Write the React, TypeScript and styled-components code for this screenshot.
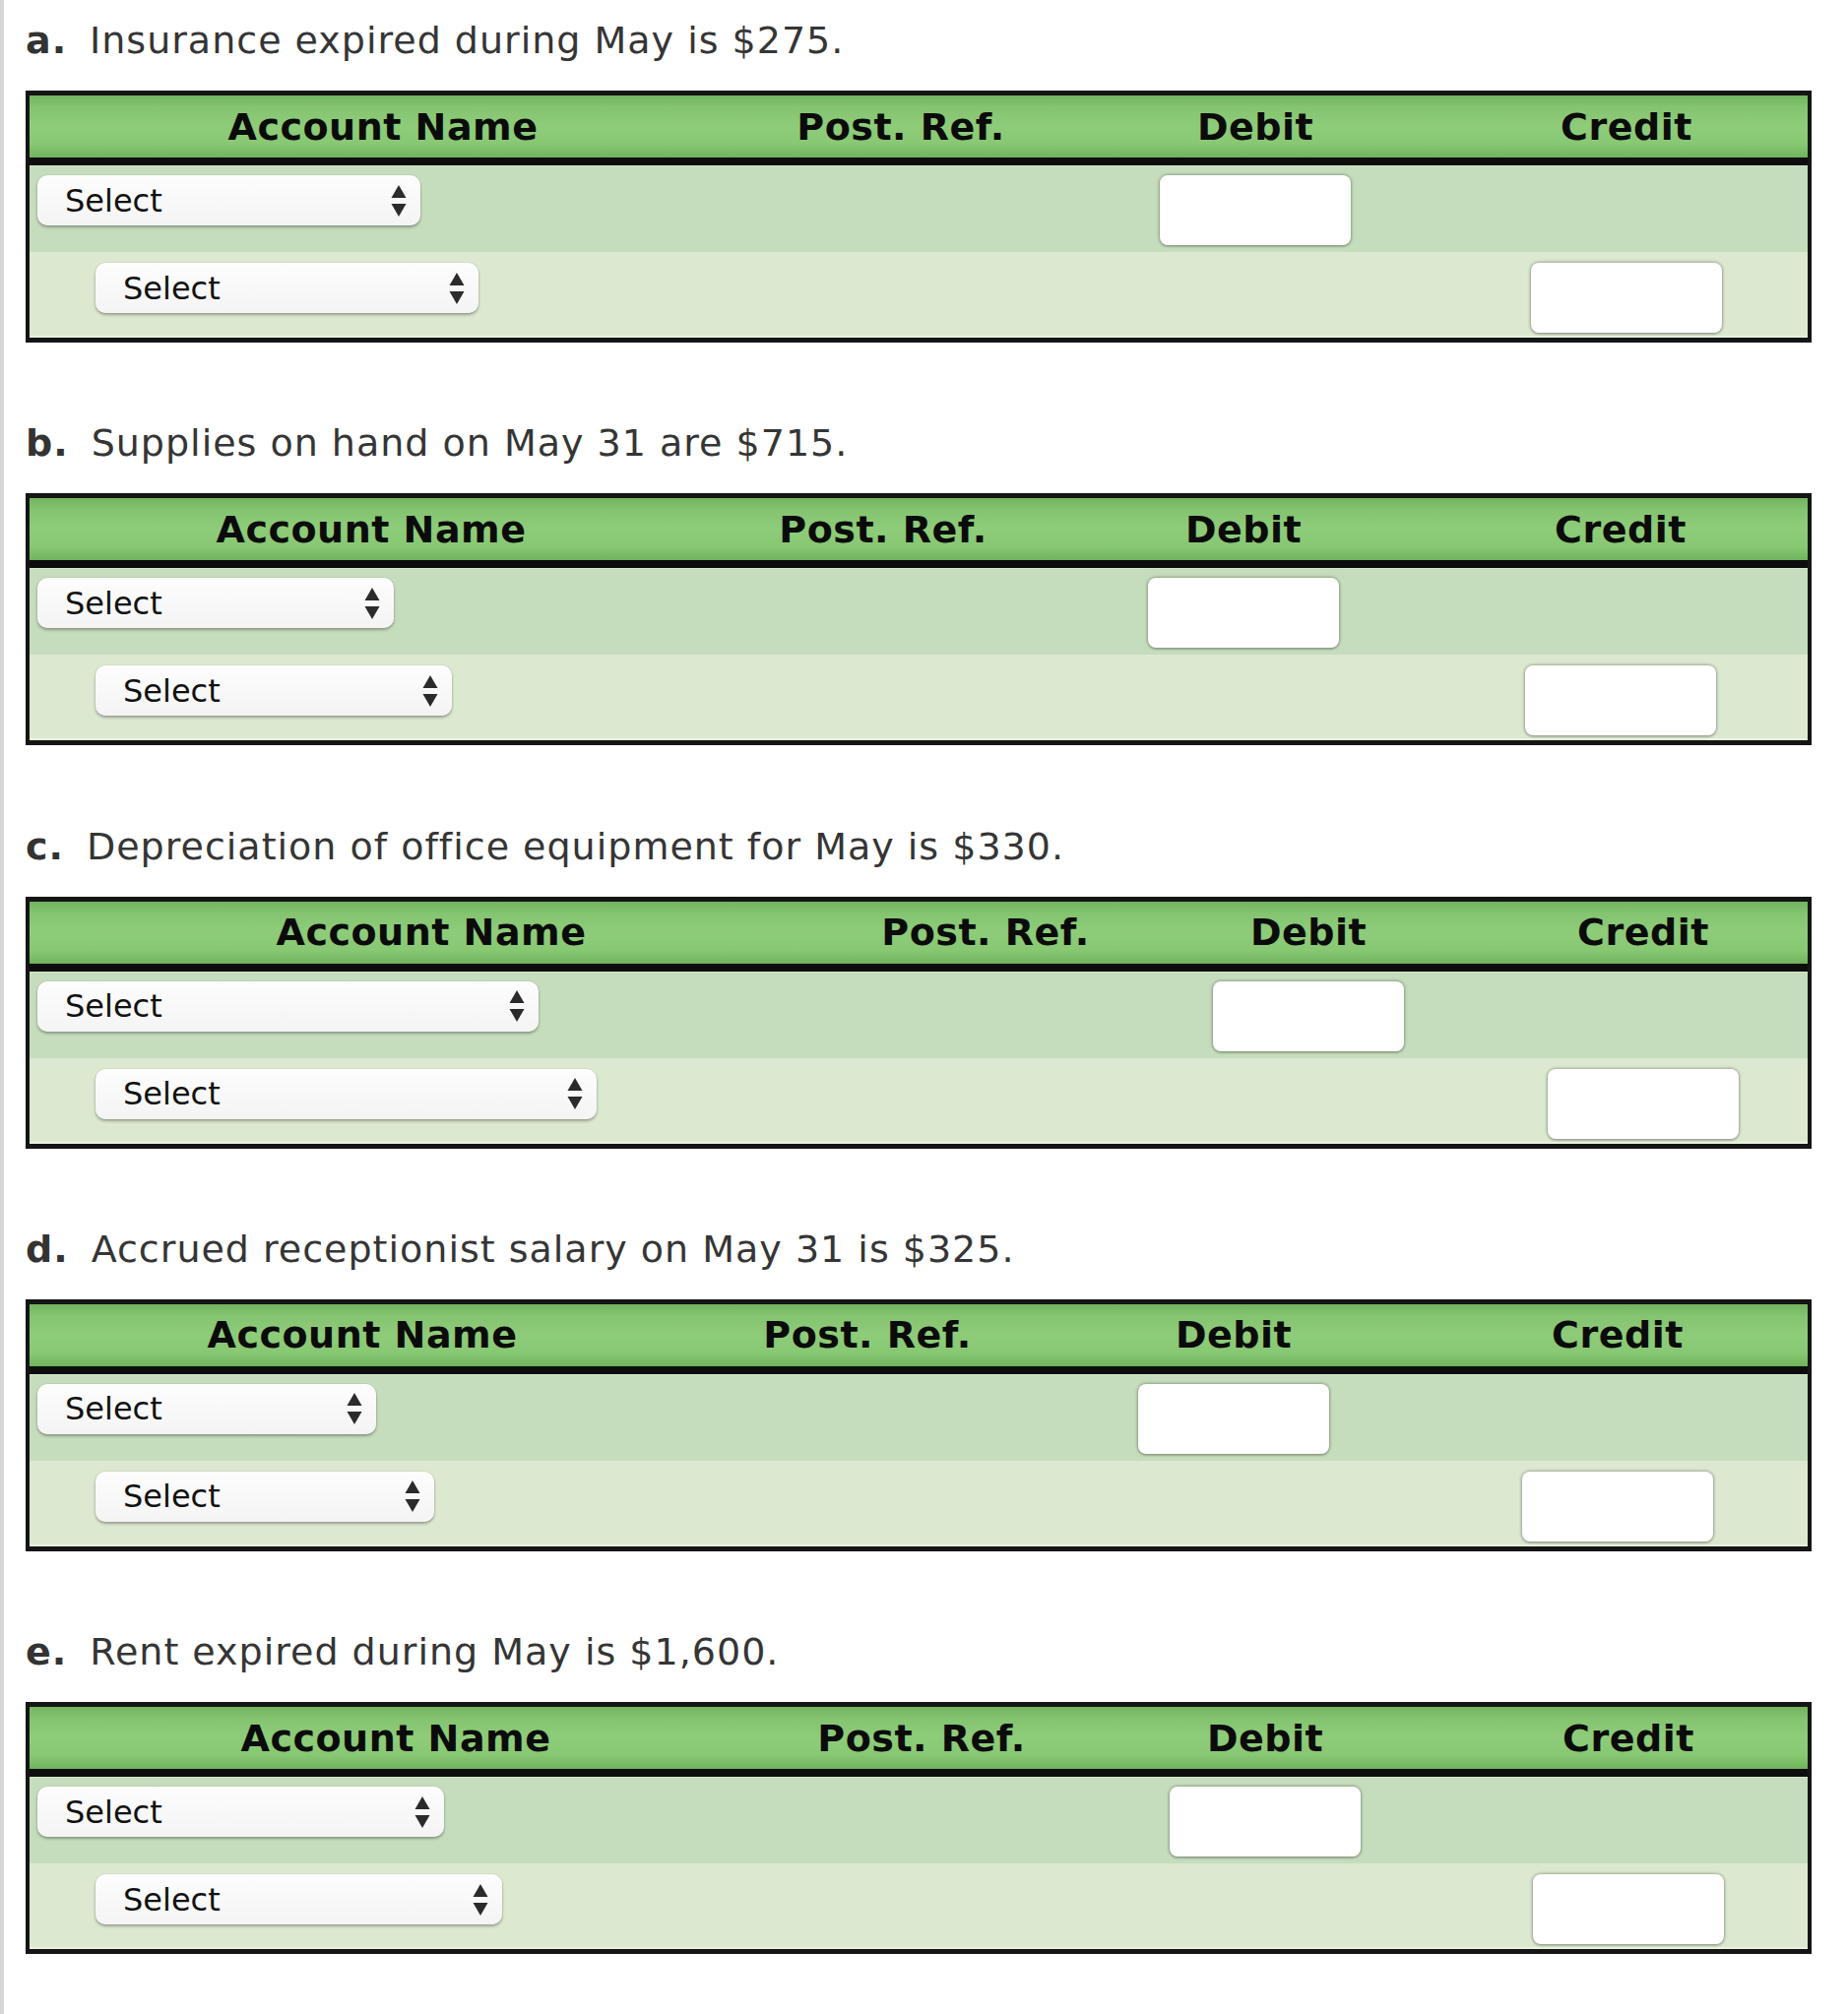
import styled, { createGlobalStyle } from 'styled-components';

const GlobalStyle = createGlobalStyle`
    html,
    body {
        margin: 0;
        padding: 0;
        background: #ffffff;
    }
    body {
        font-family: 'DejaVu Sans', Verdana, sans-serif;
    }
`;

// column widths were taken from the screenshot, the table lays them out as fr
const ENTRIES = [
    {
        label: 'a.',
        text: 'Insurance expired during May is $275.',
        columns: [718, 334, 386, 368],
        selectWidth: 389,
    },
    {
        label: 'b.',
        text: 'Supplies on hand on May 31 are $715.',
        columns: [694, 346, 386, 380],
        selectWidth: 362,
    },
    {
        label: 'c.',
        text: 'Depreciation of office equipment for May is $330.',
        columns: [816, 310, 346, 334],
        selectWidth: 509,
    },
    {
        label: 'd.',
        text: 'Accrued receptionist salary on May 31 is $325.',
        columns: [676, 350, 394, 386],
        selectWidth: 344,
    },
    {
        label: 'e.',
        text: 'Rent expired during May is $1,600.',
        columns: [744, 324, 374, 364],
        selectWidth: 413,
    },
];

const HEADERS = ['Account Name', 'Post. Ref.', 'Debit', 'Credit'];

const SelectArrows = () => (
    <svg width="16" height="32" viewBox="0 0 16 32">
        <polygon points="8,0 15.5,13 0.5,13" fill="#2b2b2b" />
        <polygon points="0.5,19 15.5,19 8,32" fill="#2b2b2b" />
    </svg>
);

const App = () => {
    return (
        <>
            <GlobalStyle />
            <Page>
                {ENTRIES.map(({ label, text, columns, selectWidth }) => {
                    const template = columns.map((c) => `${c}fr`).join(' ');
                    return (
                        <Entry key={label}>
                            <Prompt>
                                <Letter>{label}</Letter>
                                {text}
                            </Prompt>
                            <Journal>
                                <HeadRow $columns={template}>
                                    {HEADERS.map((h) => (
                                        <HeadCell key={h}>{h}</HeadCell>
                                    ))}
                                </HeadRow>
                                <BodyRow $columns={template} $tone="dark">
                                    <AccountCell $indent={0}>
                                        <Dropdown $width={selectWidth}>
                                            <span>Select</span>
                                            <SelectArrows />
                                        </Dropdown>
                                    </AccountCell>
                                    <Cell />
                                    <AmountCell>
                                        <AmountInput type="text" aria-label="Debit" />
                                    </AmountCell>
                                    <Cell />
                                </BodyRow>
                                <BodyRow $columns={template} $tone="light">
                                    <AccountCell $indent={59}>
                                        <Dropdown $width={selectWidth}>
                                            <span>Select</span>
                                            <SelectArrows />
                                        </Dropdown>
                                    </AccountCell>
                                    <Cell />
                                    <Cell />
                                    <AmountCell>
                                        <AmountInput type="text" aria-label="Credit" />
                                    </AmountCell>
                                </BodyRow>
                            </Journal>
                        </Entry>
                    );
                })}
            </Page>
        </>
    );
};

export default App;

const Page = styled.div`
    box-sizing: border-box;
    min-height: 100vh;
    padding: 18px 0 0 22px;
    border-left: 4px solid #d6d6d6;
`;

const Entry = styled.section`
    padding-bottom: 79.3px;
`;

const Prompt = styled.p`
    margin: 0;
    height: 46px;
    font-size: 38px;
    line-height: 46px;
    letter-spacing: 1px;
    color: #353535;
    white-space: nowrap;
`;

const Letter = styled.b`
    margin-right: 23px;
    font-weight: 700;
    color: #333333;
`;

const Journal = styled.div`
    box-sizing: border-box;
    width: 1814px;
    margin-top: 28px;
    border: 4px solid #151515;
    border-top-width: 5px;
    border-bottom-width: 5px;
`;

const HeadRow = styled.div<{ $columns: string }>`
    display: grid;
    grid-template-columns: ${({ $columns }) => $columns};
    align-items: center;
    height: 63px;
    border-bottom: 8px solid #0d0d0d;
    background: linear-gradient(
        to bottom,
        #72b45f 0%,
        #84c36f 18%,
        #8ecc79 48%,
        #88c873 78%,
        #70b25d 100%
    );
`;

const HeadCell = styled.div`
    text-align: center;
    font-size: 38px;
    font-weight: 700;
    letter-spacing: 0.5px;
    color: #0b0b0b;
    white-space: nowrap;
`;

const BodyRow = styled.div<{ $columns: string; $tone: 'dark' | 'light' }>`
    display: grid;
    grid-template-columns: ${({ $columns }) => $columns};
    align-items: start;
    box-sizing: border-box;
    height: ${({ $tone }) => ($tone === 'dark' ? '88px' : '87px')};
    padding-top: ${({ $tone }) => ($tone === 'dark' ? '10px' : '11px')};
    background: ${({ $tone }) => ($tone === 'dark' ? '#c5ddbc' : '#dce8d0')};
    box-shadow: ${({ $tone }) =>
        $tone === 'dark' ? 'inset 0 1px 0 #d2e6c8' : 'inset 0 -2px 0 #e8f2e0'};
`;

const Cell = styled.div``;

const AccountCell = styled.div<{ $indent: number }>`
    display: flex;
    padding-left: ${({ $indent }) => 8 + $indent}px;
`;

const AmountCell = styled.div`
    display: flex;
    justify-content: center;
`;

const Dropdown = styled.div<{ $width: number }>`
    box-sizing: border-box;
    display: flex;
    align-items: center;
    justify-content: space-between;
    width: ${({ $width }) => $width}px;
    height: 51px;
    padding: 0 14px 0 28px;
    border-radius: 10px;
    background: linear-gradient(to bottom, #fdfdfd, #f4f4f4);
    box-shadow: 0 0 1px rgba(0, 0, 0, 0.35), 0 2px 3px rgba(0, 0, 0, 0.3);
    font-size: 32px;
    color: #111111;
    cursor: default;
`;

const AmountInput = styled.input`
    box-sizing: border-box;
    width: 194px;
    height: 71px;
    padding: 0 10px;
    border: none;
    border-radius: 8px;
    outline: none;
    background: #ffffff;
    box-shadow: 0 0 3px 1px rgba(0, 0, 0, 0.28), 0 2px 2px rgba(0, 0, 0, 0.12);
    font-family: 'DejaVu Sans', Verdana, sans-serif;
    font-size: 30px;
`;
